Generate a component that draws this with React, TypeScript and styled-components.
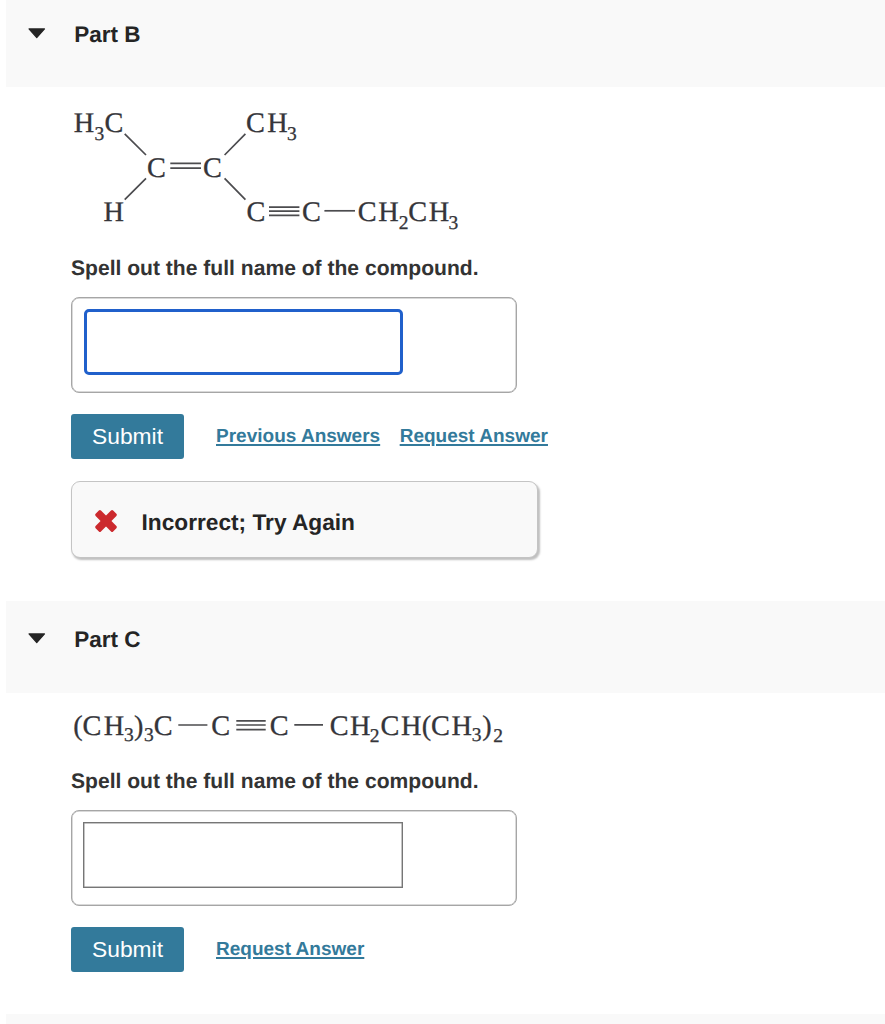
import React from 'react';
import styled, { createGlobalStyle } from 'styled-components';

const GlobalStyle = createGlobalStyle`
  html, body { margin: 0; padding: 0; background: #fff; overflow: hidden; }
  *, *::before, *::after { box-sizing: border-box; }
  body { font-family: "Liberation Sans", Arial, Helvetica, sans-serif; text-rendering: geometricPrecision; }
`;

const Page = styled.main`
  width: 885px;
  height: 1024px;
  padding-left: 6px;
  overflow: hidden;
  background: #fff;
`;

const PartHeader = styled.header<{ $height: number; $padTop: number }>`
  display: flex;
  align-items: flex-start;
  height: ${(p) => p.$height}px;
  padding: ${(p) => p.$padTop}px 0 0 22px;
  background: #f9f9f9;
`;

const Caret = styled.svg`
  width: 18px;
  height: 11px;
  margin-top: 7px;
  flex: none;
`;

const PartTitle = styled.h2`
  margin: 0 0 0 28.2px;
  font-size: 22.5px;
  line-height: 28px;
  font-weight: 700;
  color: #252525;
`;

const PartBody = styled.section<{ $height: number }>`
  display: flex;
  flex-direction: column;
  align-items: flex-start;
  height: ${(p) => p.$height}px;
  padding-left: 65px;
`;

const Structure = styled.svg`
  display: block;
  flex: none;
  font-family: "Liberation Serif", "Times New Roman", serif;
  font-size: 28.3px;
  fill: #35353a;
  stroke: #35353a;
  stroke-width: 0.3;
`;

const Bonds = styled.g`
  stroke: #4c4c4f;
  stroke-width: 1.7;
  fill: none;
`;

const Prompt = styled.p`
  margin: 0;
  font-size: 21.08px;
  line-height: 26px;
  font-weight: 700;
  color: #333;
`;

const AnswerBox = styled.div`
  width: 446px;
  height: 96px;
  margin-top: 15px;
  padding: 11px 12px;
  border: 1px solid #a6a6a6;
  border-radius: 8px;
  box-shadow: inset 0 0 0 0.5px #b4b4b4;
`;

const AnswerInput = styled.input<{ $active?: boolean }>`
  display: block;
  width: ${(p) => (p.$active ? 319 : 320)}px;
  height: 66px;
  margin-left: ${(p) => (p.$active ? 0 : -1)}px;
  padding: 0 10px;
  font-size: 22px;
  background: #fff;
  outline: none;
  border: ${(p) => (p.$active ? '3px solid #2060cb' : '1px solid #767676')};
  border-radius: ${(p) => (p.$active ? 5 : 0)}px;
  box-shadow: ${(p) => (p.$active ? 'none' : 'inset 0 0 0 0.5px #8a8a8a')};
`;

const Actions = styled.div`
  display: flex;
  align-items: center;
  height: 45px;
  margin-top: 21px;
`;

const SubmitButton = styled.button`
  width: 113px;
  height: 45px;
  margin-right: 32px;
  padding: 0;
  border: 0;
  border-radius: 3px;
  background: #337a9b;
  color: #fff;
  font: 400 22.8px/45px "Liberation Sans", Arial, sans-serif;
`;

const ActionLink = styled.a`
  margin-right: 19.5px;
  font-size: 19.03px;
  line-height: 24px;
  font-weight: 700;
  color: #337a9b;
  text-decoration: underline;
  text-decoration-thickness: 1.5px;
  text-underline-offset: 2px;
  text-decoration-skip-ink: auto;
`;

const Feedback = styled.div`
  display: flex;
  align-items: center;
  width: 467px;
  height: 77px;
  margin-top: 22px;
  padding: 3px 0 0 22px;
  border: 1px solid #c4c4c4;
  border-radius: 9px;
  background: #f9f9f9;
  box-shadow: 1.5px 2px 2px rgba(0, 0, 0, 0.25);
`;

const Cross = styled.svg`
  width: 24px;
  height: 24px;
  margin: 0 23.5px 1px 0;
`;

const FeedbackText = styled.strong`
  padding-top: 2px;
  font-size: 22.7px;
  line-height: 28px;
  color: #252525;
`;

const NextHeader = styled.div`
  height: 10px;
  background: #f9f9f9;
`;

const CaretIcon = () => (
  <Caret viewBox="0 0 18 11" aria-hidden="true">
    <path d="M1 .9H16.5L8.75 9.5Z" fill="#252525" stroke="#252525" strokeWidth="1.2" strokeLinejoin="round" />
  </Caret>
);

interface AtomProps {
  x: number;
  y: number;
  children: string;
}

const Atom = ({ x, y, children }: AtomProps) => <text x={x} y={y}>{children}</text>;
const Sub = ({ x, y, children }: AtomProps) => <text x={x} y={y} fontSize="19.5">{children}</text>;

const EnyneStructure = () => (
  <Structure width="400" height="169" viewBox="71 87 400 169" role="img">
    <Atom x={73.8} y={132}>H</Atom>
    <Sub x={94.5} y={139.6}>3</Sub>
    <Atom x={104.6} y={132}>C</Atom>
    <Atom x={246} y={132}>C</Atom>
    <Atom x={267.2} y={132}>H</Atom>
    <Sub x={287} y={139.6}>3</Sub>
    <Atom x={147} y={177.2}>C</Atom>
    <Atom x={203} y={177.2}>C</Atom>
    <Atom x={103.4} y={221.2}>H</Atom>
    <Atom x={246.4} y={221.2}>C</Atom>
    <Atom x={302} y={221.2}>C</Atom>
    <Atom x={357.8} y={221.2}>C</Atom>
    <Atom x={378.2} y={221.2}>H</Atom>
    <Sub x={398.8} y={228.9}>2</Sub>
    <Atom x={408.3} y={221.2}>C</Atom>
    <Atom x={428.8} y={221.2}>H</Atom>
    <Sub x={448.6} y={228.9}>3</Sub>
    <Bonds>
      <path d="M124.7 133.8L146 155M245.4 133.8L224.6 155M146 178.4L124.7 199.7M224.6 178.4L245.4 199.7" />
      <path d="M170.3 163.4H201M170.3 168.2H201" />
      <path d="M269 207.2H299.4M269 211.2H299.4M269 215.4H299.4" />
      <path d="M324.4 210.8H355" />
    </Bonds>
  </Structure>
);

const AlkyneStructure = () => (
  <Structure width="450" height="76" viewBox="71 693 450 76" role="img">
    <Atom x={73.3} y={735.1}>(</Atom>
    <Atom x={82.6} y={735.1}>C</Atom>
    <Atom x={103.8} y={735.1}>H</Atom>
    <Sub x={124} y={741.2}>3</Sub>
    <Atom x={134} y={735.1}>)</Atom>
    <Sub x={144} y={741.2}>3</Sub>
    <Atom x={153.8} y={735.1}>C</Atom>
    <Atom x={211.3} y={735.1}>C</Atom>
    <Atom x={269.8} y={735.1}>C</Atom>
    <Atom x={329.8} y={735.1}>C</Atom>
    <Atom x={350} y={735.1}>H</Atom>
    <Sub x={369.8} y={741.8}>2</Sub>
    <Atom x={380.5} y={735.1}>C</Atom>
    <Atom x={401} y={735.1}>H</Atom>
    <Atom x={421.7} y={735.1}>(</Atom>
    <Atom x={431} y={735.1}>C</Atom>
    <Atom x={451.6} y={735.1}>H</Atom>
    <Sub x={471.8} y={741.2}>3</Sub>
    <Atom x={482.2} y={735.1}>)</Atom>
    <Sub x={493.2} y={741.8}>2</Sub>
    <Bonds>
      <path d="M178.3 725H207.4M236.3 720.8H265.7M236.3 725H265.7M236.3 729.6H265.7M294.3 724.8H323" />
    </Bonds>
  </Structure>
);

export default function App() {
  return (
    <>
      <GlobalStyle />
      <Page>
        <PartHeader $height={87} $padTop={21}>
          <CaretIcon />
          <PartTitle>Part B</PartTitle>
        </PartHeader>
        <PartBody $height={514}>
          <EnyneStructure />
          <Prompt>Spell out the full name of the compound.</Prompt>
          <AnswerBox>
            <AnswerInput $active aria-label="Part B answer" />
          </AnswerBox>
          <Actions>
            <SubmitButton>Submit</SubmitButton>
            <ActionLink>Previous Answers</ActionLink>
            <ActionLink>Request Answer</ActionLink>
          </Actions>
          <Feedback>
            <Cross viewBox="-12 -12 24 24" aria-hidden="true">
              <g fill="#cc2a2e">
                <rect x="-12.4" y="-3.8" width="24.8" height="7.6" rx="1.5" transform="rotate(45)" />
                <rect x="-12.4" y="-3.8" width="24.8" height="7.6" rx="1.5" transform="rotate(-45)" />
              </g>
            </Cross>
            <FeedbackText>Incorrect; Try Again</FeedbackText>
          </Feedback>
        </PartBody>
        <PartHeader $height={92} $padTop={25}>
          <CaretIcon />
          <PartTitle>Part C</PartTitle>
        </PartHeader>
        <PartBody $height={321}>
          <AlkyneStructure />
          <Prompt>Spell out the full name of the compound.</Prompt>
          <AnswerBox>
            <AnswerInput aria-label="Part C answer" />
          </AnswerBox>
          <Actions>
            <SubmitButton>Submit</SubmitButton>
            <ActionLink>Request Answer</ActionLink>
          </Actions>
        </PartBody>
        <NextHeader />
      </Page>
    </>
  );
}
